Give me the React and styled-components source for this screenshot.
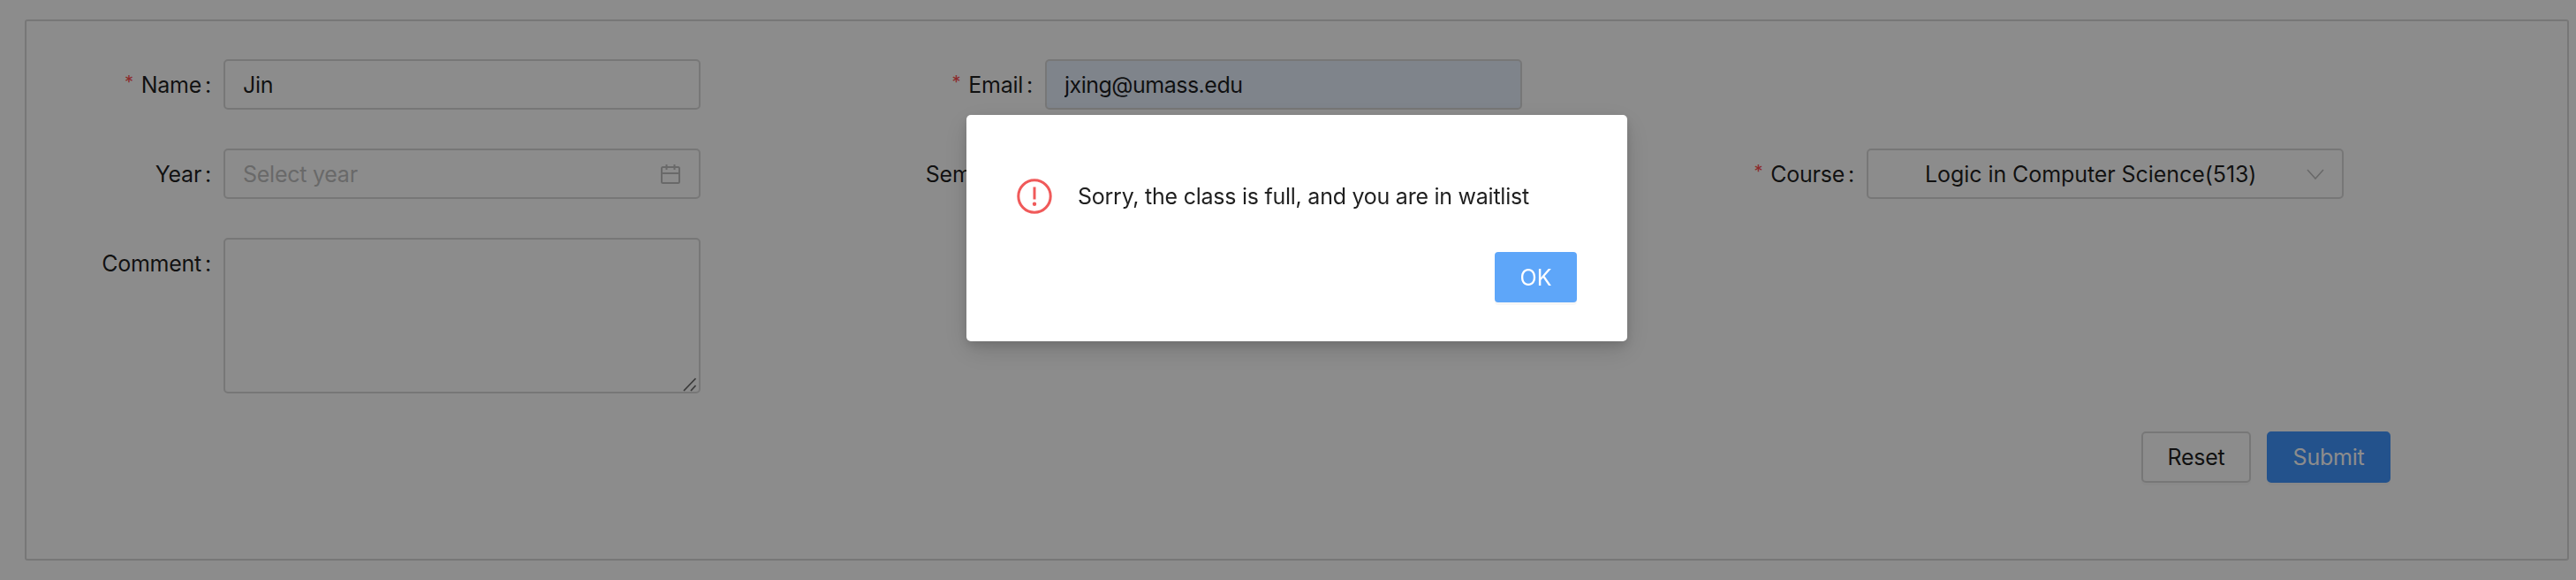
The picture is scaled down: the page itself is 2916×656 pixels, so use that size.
import React from 'react';
import styled, { createGlobalStyle } from 'styled-components';

const GlobalStyle = createGlobalStyle`
  * {
    box-sizing: border-box;
  }

  body {
    margin: 0;
    background-color: #fff;
    font-family: Inter, "Liberation Sans", sans-serif;
    font-size: 25px;
    letter-spacing: -0.25px;
    color: rgba(0, 0, 0, 0.88);
  }
`;

function CalendarIcon() {
  return (
    <svg width="24" height="24" viewBox="0 0 24 24" fill="none" stroke="#bfbfbf" strokeWidth="2">
      <rect x="2" y="4" width="20" height="18" rx="1.5" />
      <path d="M2 11h20M7.5 1v6M16.5 1v6" />
    </svg>
  );
}

function ChevronIcon() {
  return (
    <svg width="20" height="12" viewBox="0 0 20 12" fill="none" stroke="#bfbfbf" strokeWidth="1.6">
      <path d="M1 1l9 10 9-10" />
    </svg>
  );
}

function AlertIcon() {
  return (
    <svg width="40" height="40" viewBox="0 0 40 40" fill="none">
      <circle cx="20" cy="20" r="18.2" stroke="#f05a5a" strokeWidth="3" />
      <path d="M20 9.5v14" stroke="#f05a5a" strokeWidth="3" />
      <circle cx="20" cy="28.8" r="2.2" fill="#f05a5a" />
    </svg>
  );
}

function GripIcon() {
  return (
    <svg width="16" height="16" viewBox="0 0 16 16" fill="none" stroke="#6a6a6a" strokeWidth="1.8">
      <path d="M1 15L14.5 1M9 15l5.5-6" />
    </svg>
  );
}

function Field({ label, required, children }) {
  return (
    <FieldWrap>
      <Label>
        {required && <Star>*</Star>}
        {label}
        <Colon>:</Colon>
      </Label>
      {children}
    </FieldWrap>
  );
}

export default function App() {
  return (
    <>
      <GlobalStyle />
      <Frame>
        <FormGrid>
          <Field label="Name" required>
            <TextInput defaultValue="Jin" readOnly />
          </Field>
          <Field label="Email" required>
            <TextInput $filled defaultValue="jxing@umass.edu" readOnly />
          </Field>
          <div />
          <Field label="Year">
            <InputBox>
              <Placeholder>Select year</Placeholder>
              <CalendarIcon />
            </InputBox>
          </Field>
          <Field label="Semester">
            <TextInput readOnly />
          </Field>
          <Field label="Course" required>
            <InputBox>
              <SelectValue>Logic in Computer Science(513)</SelectValue>
              <ChevronIcon />
            </InputBox>
          </Field>
          <Field label="Comment">
            <CommentWrap>
              <CommentBox readOnly />
              <Grip>
                <GripIcon />
              </Grip>
            </CommentWrap>
          </Field>
        </FormGrid>
        <Actions>
          <Button>Reset</Button>
          <Button $primary>Submit</Button>
        </Actions>
      </Frame>
      <Overlay>
        <Modal>
          <ModalBody>
            <AlertIcon />
            <Message>Sorry, the class is full, and you are in waitlist</Message>
          </ModalBody>
          <ModalFooter>
            <OkButton>OK</OkButton>
          </ModalFooter>
        </Modal>
      </Overlay>
    </>
  );
}

const Frame = styled.section`
  display: flex;
  flex-direction: column;
  margin: 22px 8px 22px 28px;
  height: 612px;
  padding: 43px 200px 0 53px;
  border: 2px solid #d9d9d9;
  border-radius: 3px;
`;

const FormGrid = styled.div`
  display: grid;
  grid-template-columns: 930px 930px 1fr;
  row-gap: 44px;
`;

const FieldWrap = styled.div`
  display: flex;
  align-items: flex-start;
`;

const Label = styled.label`
  display: flex;
  justify-content: flex-end;
  align-items: center;
  flex: 0 0 170px;
  height: 57px;
  white-space: nowrap;
`;

const Star = styled.span`
  margin: 0 9px 6px 0;
  font-size: 20px;
  color: #ff4d4f;
`;

const Colon = styled.span`
  margin: 0 14px 0 4px;
`;

const TextInput = styled.input`
  flex: 0 0 540px;
  height: 57px;
  padding: 0 20px;
  border: 2px solid #d9d9d9;
  border-radius: 5px;
  outline: none;
  background-color: ${props => (props.$filled ? '#e8f0fe' : '#fff')};
  font: inherit;
  letter-spacing: ${props => (props.$filled ? '-0.5px' : 'inherit')};
  color: inherit;
`;

const InputBox = styled.div`
  display: flex;
  align-items: center;
  justify-content: space-between;
  flex: 0 0 540px;
  height: 57px;
  padding: 0 20px;
  border: 2px solid #d9d9d9;
  border-radius: 5px;
`;

const Placeholder = styled.span`
  color: #bfbfbf;
`;

const SelectValue = styled.span`
  margin-left: 44px;
  letter-spacing: -0.07px;
`;

const CommentWrap = styled.div`
  position: relative;
  display: flex;
  flex: 0 0 540px;
  height: 176px;
`;

const CommentBox = styled.textarea`
  flex: 1;
  border: 2px solid #d9d9d9;
  border-radius: 5px;
  outline: none;
  resize: none;
`;

const Grip = styled.span`
  position: absolute;
  right: 4px;
  bottom: 2px;
  display: flex;
`;

const Actions = styled.div`
  display: flex;
  justify-content: flex-end;
  gap: 18px;
  margin-top: 43px;
`;

const Button = styled.button`
  width: ${props => (props.$primary ? '140px' : '124px')};
  height: 58px;
  padding: 0;
  border: 2px solid ${props => (props.$primary ? '#4096ff' : '#d9d9d9')};
  border-radius: 5px;
  background-color: ${props => (props.$primary ? '#4096ff' : '#fff')};
  box-shadow: 0 3px 0 rgba(0, 0, 0, 0.02);
  font: inherit;
  letter-spacing: inherit;
  color: ${props => (props.$primary ? '#fff' : 'rgba(0, 0, 0, 0.88)')};
`;

const Overlay = styled.div`
  position: fixed;
  inset: 0;
  background-color: rgba(0, 0, 0, 0.45);
`;

const Modal = styled.div`
  position: absolute;
  left: 1094px;
  top: 130px;
  display: flex;
  flex-direction: column;
  justify-content: space-between;
  width: 748px;
  height: 256px;
  padding: 72px 57px 44px 57px;
  border-radius: 5px;
  background-color: #fff;
  box-shadow: 0 10px 30px rgba(0, 0, 0, 0.14), 0 5px 12px rgba(0, 0, 0, 0.12);
`;

const ModalBody = styled.div`
  display: flex;
  align-items: center;
  gap: 29px;
`;

const Message = styled.div`
  white-space: nowrap;
`;

const ModalFooter = styled.div`
  display: flex;
  justify-content: flex-end;
`;

const OkButton = styled.button`
  width: 93px;
  height: 57px;
  border: 0;
  border-radius: 4px;
  background-color: #5ea6f9;
  box-shadow: 0 3px 0 rgba(0, 0, 0, 0.03);
  font: inherit;
  color: #fff;
`;
